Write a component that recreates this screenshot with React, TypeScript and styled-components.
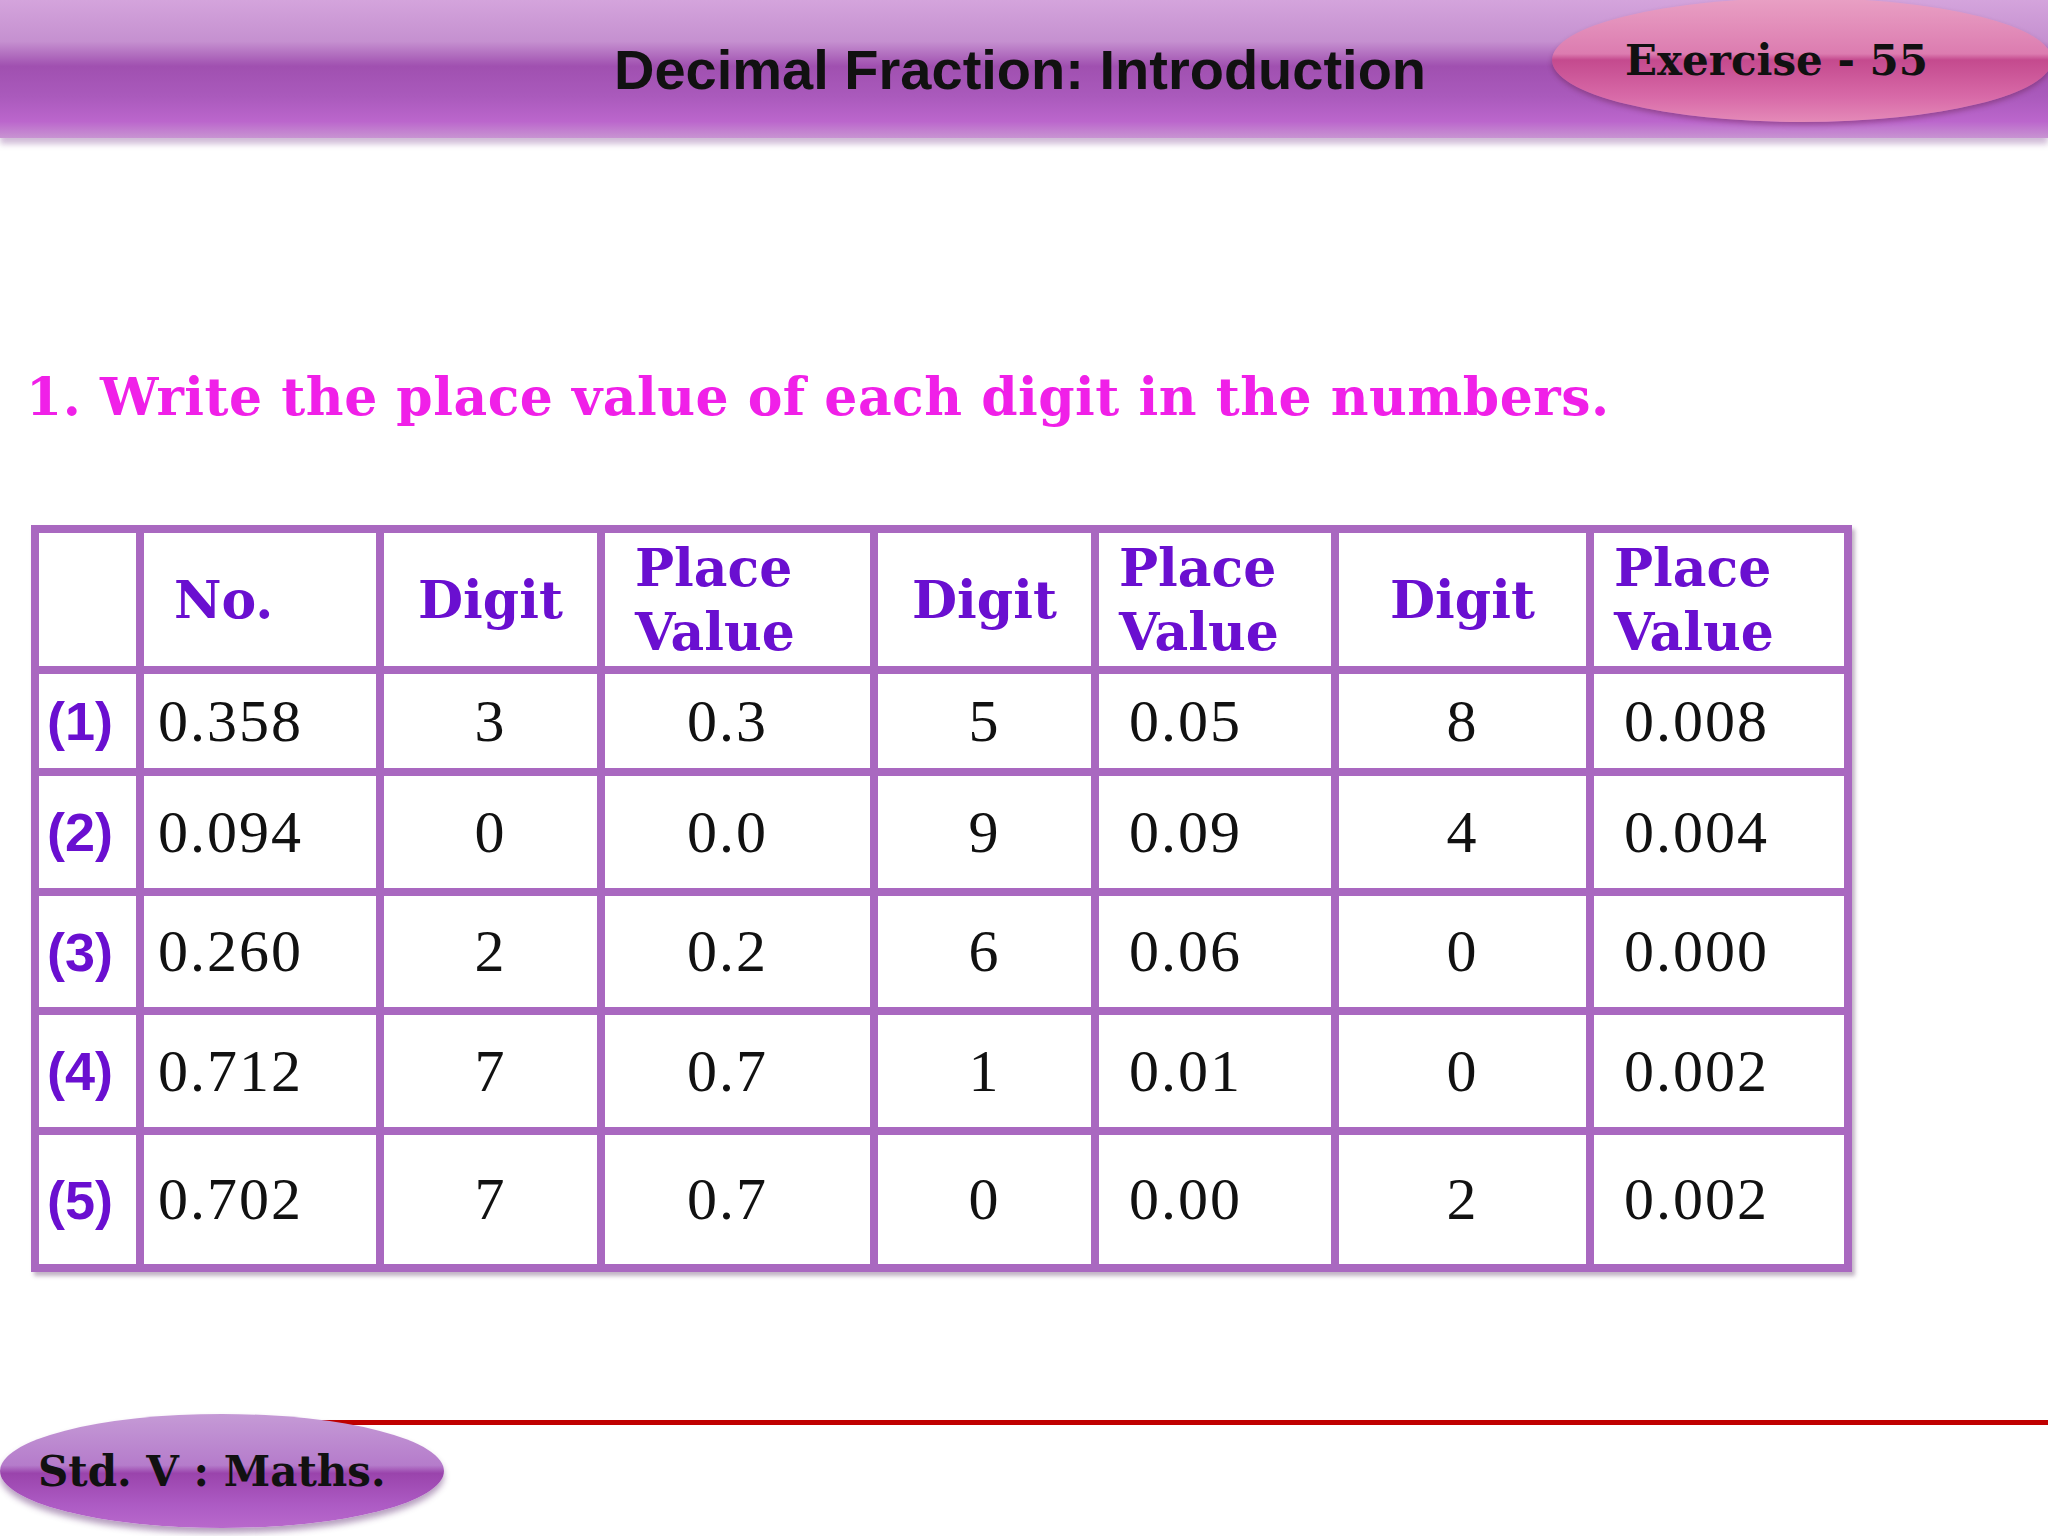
import React from "react";
import styled, { createGlobalStyle } from "styled-components";

const Global = createGlobalStyle`
  html, body { margin: 0; padding: 0; background: #fff; }
`;

const Page = styled.div`
  width: 2048px; height: 1536px; position: relative; overflow: hidden;
  display: flex; flex-direction: column; background: #fff;
`;

const Header = styled.div`
  height: 138px; position: relative;
  background: linear-gradient(#d4a4dc 0%, #c590d0 30%, #a050b0 48%, #aa5abc 70%, #bb66cc 88%, #c894d2 100%);
  box-shadow: 0 6px 6px rgba(120,60,140,0.35);
  display: flex; align-items: center;
`;

const Title = styled.h1`
  margin: 0 0 0 614px; font: bold 56px "Liberation Sans", Arial, sans-serif; color: #111;
`;

const Badge = styled.div`
  position: absolute; right: -4px; top: -2px; width: 500px; height: 124px; border-radius: 50%;
  background: linear-gradient(#e9a0c4 0%, #dc7cb0 45%, #c44a8e 50%, #d86aa8 80%, #e48ab8 100%);
  box-shadow: 0 3px 5px rgba(100,30,70,0.4);
  display: flex; align-items: center; padding-left: 73px; box-sizing: border-box;
  font: bold 42px "DejaVu Serif", serif; color: #111; padding-bottom: 0px;
`;

const Question = styled.p`
  margin: 226px 0 0 26px; font: bold 52px "DejaVu Serif", serif; color: #f020e8; line-height: 66px;
  letter-spacing: 0.5px;
`;

const Table = styled.table`
  margin: 95px 0 0 31px; border-collapse: collapse; table-layout: fixed; width: 1813px;
  box-shadow: 3px 4px 4px rgba(80,40,90,0.35);
`;

const Cell = styled.td<{ $head?: boolean; $left?: boolean }>`
  border: 8px solid #a968c0; padding: 0;
  text-align: ${(p) => (p.$left ? "left" : "center")};
  color: ${(p) => (p.$head ? "#6a0fd0" : "#111")};
  font: ${(p) => (p.$head ? "bold 52px/64px \"DejaVu Serif\", serif" : "60px \"Liberation Serif\", serif")};
  letter-spacing: ${(p) => (p.$head ? "0" : "2px")};
  overflow: hidden; white-space: nowrap;
`;

const Label = styled.td`
  border: 8px solid #a968c0; padding: 0 0 0 8px;
  font: bold 54px "Liberation Sans", sans-serif; color: #6a0fd0;
`;

const Footer = styled.div`
  position: absolute; left: 0; right: 0; top: 1414px; height: 122px;
`;

const RedLine = styled.div`
  position: absolute; left: 320px; right: 0; top: 6px; height: 5px; background: #c00000;
`;

const Pill = styled.div`
  position: absolute; left: 0; top: 0; width: 444px; height: 114px; border-radius: 50%;
  background: linear-gradient(#c59ad6 0%, #b57ccb 45%, #9a44ac 52%, #ad5bc4 80%, #b869cc 100%);
  box-shadow: 0 5px 6px rgba(90,40,110,0.45);
  display: flex; align-items: center; padding-left: 38px; box-sizing: border-box;
  font: bold 42px "DejaVu Serif", serif; color: #111;
`;

const widths = [105, 240, 221, 273, 221, 240, 255, 258];
const heights = [102, 120, 119, 120, 137];
const rows = [
  ["0.358", "3", "0.3", "5", "0.05", "8", "0.008"],
  ["0.094", "0", "0.0", "9", "0.09", "4", "0.004"],
  ["0.260", "2", "0.2", "6", "0.06", "0", "0.000"],
  ["0.712", "7", "0.7", "1", "0.01", "0", "0.002"],
  ["0.702", "7", "0.7", "0", "0.00", "2", "0.002"],
];
const leftCols = new Set([0, 2, 4, 6]);
const pads: Record<number, number> = { 0: 14, 2: 82, 4: 30, 6: 30 };

export default function App() {
  return (
    <Page>
      <Global />
      <Header>
        <Title>Decimal Fraction: Introduction</Title>
        <Badge>Exercise - 55</Badge>
      </Header>
      <Question>1. Write the place value of each digit in the numbers.</Question>
      <Table>
        <colgroup>
          {widths.map((w, i) => <col key={i} style={{ width: w }} />)}
        </colgroup>
        <tbody>
          <tr style={{ height: 141 }}>
            <Cell $head />
            <Cell $head $left style={{ paddingLeft: 30 }}>No.</Cell>
            <Cell $head>Digit</Cell>
            <Cell $head $left style={{ paddingLeft: 30 }}>Place<br />Value</Cell>
            <Cell $head>Digit</Cell>
            <Cell $head $left style={{ paddingLeft: 20 }}>Place<br />Value</Cell>
            <Cell $head>Digit</Cell>
            <Cell $head $left style={{ paddingLeft: 20 }}>Place<br />Value</Cell>
          </tr>
          {rows.map((r, i) => (
            <tr key={i} style={{ height: heights[i] }}>
              <Label>({i + 1})</Label>
              {r.map((v, j) => (
                <Cell key={j} $left={leftCols.has(j)} style={leftCols.has(j) ? { paddingLeft: pads[j] } : undefined}>{v}</Cell>
              ))}
            </tr>
          ))}
        </tbody>
      </Table>
      <Footer>
        <RedLine />
        <Pill>Std. V : Maths.</Pill>
      </Footer>
    </Page>
  );
}
